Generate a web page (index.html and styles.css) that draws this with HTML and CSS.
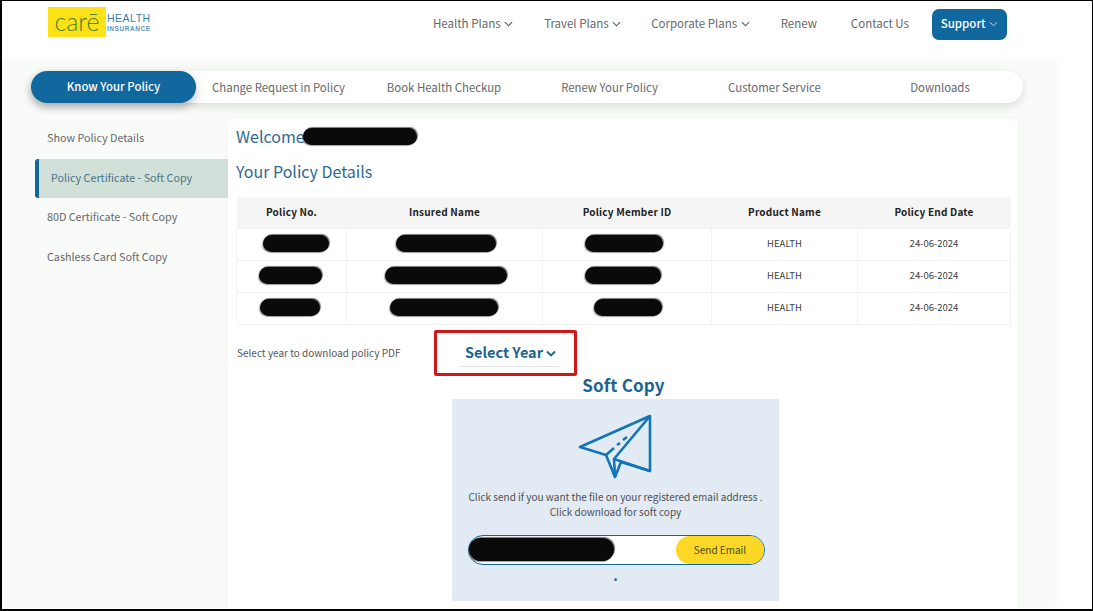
FILE: index.html
```html
<!DOCTYPE html>
<html lang="en">
<head>
    <meta charset="UTF-8">
    <meta name="viewport" content="width=device-width, initial-scale=1.0">
    <title>Care Health Insurance - Policy Details</title>
    <link rel="stylesheet" href="styles.css">
</head>
<body>

<div class="page">
    <!-- top navigation -->
    <header class="site-header">
        <div class="logo">
            <span class="logo-box">carē</span>
            <span class="logo-text">
                <span class="logo-health">HEALTH</span>
                <span class="logo-ins">INSURANCE</span>
            </span>
        </div>
        <nav class="main-nav">
            <a class="nav-link nav-health">Health Plans <svg class="chev" viewBox="0 0 10 6"><path d="M1 1l4 4 4-4"/></svg></a>
            <a class="nav-link nav-travel">Travel Plans <svg class="chev" viewBox="0 0 10 6"><path d="M1 1l4 4 4-4"/></svg></a>
            <a class="nav-link nav-corp">Corporate Plans <svg class="chev" viewBox="0 0 10 6"><path d="M1 1l4 4 4-4"/></svg></a>
            <a class="nav-link nav-renew">Renew</a>
            <a class="nav-link nav-contact">Contact Us</a>
            <a class="support-btn">Support <svg class="chev" viewBox="0 0 10 6"><path d="M1 1l4 4 4-4"/></svg></a>
        </nav>
    </header>

    <main class="main-area">
        <!-- policy tabs -->
        <div class="tabs">
            <div class="tab tab-active">Know Your Policy</div>
            <div class="tab tab-change">Change Request in Policy</div>
            <div class="tab tab-book">Book Health Checkup</div>
            <div class="tab tab-renew">Renew Your Policy</div>
            <div class="tab tab-service">Customer Service</div>
            <div class="tab tab-downloads">Downloads</div>
        </div>

        <div class="columns">
            <!-- side menu -->
            <aside class="side-menu">
                <div class="side-item">Show Policy Details</div>
                <div class="side-item side-active">Policy Certificate - Soft Copy</div>
                <div class="side-item">80D Certificate - Soft Copy</div>
                <div class="side-item side-last">Cashless Card Soft Copy</div>
            </aside>

            <section class="card">
                <h2 class="welcome">Welcome<span class="scribble scribble-welcome"></span></h2>
                <h2 class="details-title">Your Policy Details</h2>

                <table class="policy-table">
                    <thead>
                        <tr>
                            <th class="col-no">Policy No.</th>
                            <th class="col-name">Insured Name</th>
                            <th class="col-member">Policy Member ID</th>
                            <th class="col-product">Product Name</th>
                            <th>Policy End Date</th>
                        </tr>
                    </thead>
                    <tbody>
                        <tr>
                            <td><span class="scribble s-no1"></span></td>
                            <td><span class="scribble s-name1"></span></td>
                            <td><span class="scribble s-id1"></span></td>
                            <td>HEALTH</td>
                            <td>24-06-2024</td>
                        </tr>
                        <tr>
                            <td><span class="scribble s-no2"></span></td>
                            <td><span class="scribble s-name2"></span></td>
                            <td><span class="scribble s-id2"></span></td>
                            <td>HEALTH</td>
                            <td>24-06-2024</td>
                        </tr>
                        <tr>
                            <td><span class="scribble s-no3"></span></td>
                            <td><span class="scribble s-name3"></span></td>
                            <td><span class="scribble s-id3"></span></td>
                            <td>HEALTH</td>
                            <td>24-06-2024</td>
                        </tr>
                    </tbody>
                </table>

                <div class="year-row">
                    <span class="year-label">Select year to download policy PDF</span>
                    <div class="year-box">
                        <div class="year-select">Select Year <svg class="year-chev" viewBox="0 0 10 6"><path d="M1 1l4 4 4-4"/></svg></div>
                    </div>
                </div>

                <h3 class="soft-title">Soft Copy</h3>

                <div class="soft-panel">
                    <svg class="plane" viewBox="0 0 74 66">
                        <path d="M72 2L2 33l26 8 9 22 6-15 29 9z"/>
                        <path d="M72 2L36 45l36 12"/>
                        <path d="M36 45l1 18"/>
                        <path d="M28 41l8-7M39 31l3-2M45 26l4-3"/>
                    </svg>
                    <p class="soft-text">Click send if you want the file on your registered email address .<br>Click download for soft copy</p>
                    <div class="email-box">
                        <span class="scribble s-email"></span>
                        <button class="send-btn">Send Email</button>
                    </div>
                    <div class="dot">.</div>
                </div>
            </section>
        </div>
    </main>
</div>

</body>
</html>
```

FILE: styles.css
```css
* {
    box-sizing: border-box;
}

html, body {
    margin: 0;
    padding: 0;
    height: 100%;
    overflow: hidden;
}

body {
    font-family: "Noto Sans CJK SC", "Noto Sans", Arial, sans-serif;
    background-color: #ffffff;
    color: #5f6265;
}

.page {
    height: 611px;
    border-top: 1px solid #000;
    border-left: 2px solid #000;
    border-right: 1px solid #000;
    border-bottom: 2px solid #000;
    display: flex;
    flex-direction: column;
    overflow: hidden;
}

/* header */
.site-header {
    height: 61px;
    flex-shrink: 0;
    display: flex;
    justify-content: space-between;
    padding: 6px 85px 0 46px;
}

.logo {
    display: flex;
    height: 30px;
    gap: 1px;
}

.logo-box {
    width: 58px;
    height: 30px;
    background-color: #fbe216;
    color: #557f2e;
    font-family: Lato, "Noto Sans", sans-serif;
    font-size: 25px;
    font-weight: 300;
    line-height: 29px;
    text-align: center;
}

.logo-text {
    display: flex;
    flex-direction: column;
    font-family: "Liberation Sans", Arial, sans-serif;
    color: #3a7fab;
    padding-top: 6px;
}

.logo-health {
    font-size: 10.5px;
    line-height: 11px;
    letter-spacing: 0.5px;
}

.logo-ins {
    font-size: 6.5px;
    line-height: 9px;
    font-weight: bold;
    letter-spacing: 0.55px;
    color: #5b93b8;
}

.main-nav {
    display: flex;
    align-items: flex-start;
    height: 40px;
    padding-top: 1px;
    font-size: 11.5px;
}

.nav-link {
    display: block;
    line-height: 30px;
    white-space: nowrap;
    color: #66696c;
}

.nav-health { margin-right: 31px; }
.nav-travel { margin-right: 30px; }
.nav-corp { margin-right: 31px; }
.nav-renew { margin-right: 34px; }
.nav-contact { margin-right: 23px; }

.chev {
    width: 9px;
    height: 6px;
    margin-left: 1px;
    vertical-align: 1px;
    fill: none;
    stroke: #555;
    stroke-width: 1.2;
}

.support-btn {
    width: 75px;
    height: 31px;
    margin-top: 1px;
    line-height: 29px;
    background-color: #10689f;
    color: #ffffff;
    border-radius: 7px;
    text-align: center;
    font-size: 11.5px;
    font-weight: 500;
    white-space: nowrap;
}

.support-btn .chev {
    stroke: #dfeaf2;
    stroke-width: 1;
}

/* main area */
.main-area {
    flex: 1;
    margin-right: 37px;
    background-color: #f9fbf9;
    box-shadow: 0 -3px 8px rgba(0, 0, 0, 0.04);
    padding: 9px 0 0 29px;
    overflow: hidden;
}

.tabs {
    width: 992px;
    height: 32px;
    background-color: #ffffff;
    border-radius: 16px;
    display: flex;
    align-items: center;
    font-size: 11.4px;
    box-shadow: 0 3px 10px rgba(0, 0, 0, 0.13);
    color: #66696c;
    white-space: nowrap;
}

.tab {
    text-align: center;
    line-height: 31px;
}

.tab-active {
    width: 165px;
    height: 32px;
    background-color: #10689f;
    color: #ffffff;
    border-radius: 16px;
    font-weight: 500;
    box-shadow: 0 4px 9px rgba(0, 0, 0, 0.25);
}

.tab-change { width: 165px; }
.tab-book { width: 166px; }
.tab-renew { width: 165px; }
.tab-service { width: 165px; }
.tab-downloads { width: 166px; }

.columns {
    display: flex;
    margin-top: 16px;
    align-items: flex-start;
}

/* side menu */
.side-menu {
    width: 197px;
    font-size: 10.75px;
    padding-left: 4px;
}

.side-item {
    height: 39.5px;
    line-height: 37px;
    padding-left: 12px;
    color: #66696c;
    white-space: nowrap;
}

.side-last {
    line-height: 39px;
}

.side-active {
    height: 39px;
    background-color: #d1e0d9;
    border-left: 4px solid #10689f;
    border-radius: 3px 0 0 3px;
    padding-left: 12px;
    color: #4b7488;
}

/* card */
.card {
    width: 790px;
    height: 500px;
    background-color: #ffffff;
    border-radius: 4px 4px 0 0;
    padding: 0 8px;
    box-shadow: 0 0 6px rgba(0, 0, 0, 0.03);
}

.welcome, .details-title {
    margin: 0;
    font-weight: 400;
    font-size: 16px;
    color: #2f6a92;
    white-space: nowrap;
}

.welcome {
    padding-top: 4px;
    line-height: 26px;
}

.details-title {
    margin-top: 9px;
    line-height: 26px;
}

.policy-table {
    margin-top: 13px;
    width: 775px;
    border-collapse: collapse;
    table-layout: fixed;
    font-size: 9.5px;
    color: #404346;
}

.policy-table th {
    height: 31px;
    padding-bottom: 2px;
    background-color: #f5f5f5;
    font-size: 10px;
    color: #222;
    font-weight: 700;
    letter-spacing: 0.2px;
}

.policy-table td {
    height: 32px;
    padding: 0 0 2px;
    text-align: center;
    border: 1px solid #f3f3f3;
}

.col-no { width: 110px; }
.col-name { width: 196px; }
.col-member { width: 169px; }
.col-product { width: 146px; }

/* marker strokes hiding private data */
.scribble {
    display: inline-block;
    height: 17px;
    background-color: #0a0a0a;
    border-radius: 9px;
    vertical-align: middle;
    box-shadow: 1px -1px 1px rgba(60, 60, 60, 0.7), -1px 1px 1px rgba(70, 70, 70, 0.5);
}

.scribble-welcome { width: 114px; height: 17px; margin-left: -2px; vertical-align: -2px; }
.s-no1 { width: 66px; margin-left: 8px; }
.s-no2 { width: 63px; margin-left: -3px; }
.s-no3 { width: 60px; margin-left: -3px; }
.s-name1 { width: 100px; margin-left: 3px; }
.s-name2 { width: 122px; margin-left: 3px; }
.s-name3 { width: 108px; margin-left: -1px; }
.s-id1 { width: 78px; margin-left: -6px; }
.s-id2 { width: 76px; margin-left: -9px; }
.s-id3 { width: 68px; margin-left: 1px; }

.year-row {
    display: flex;
    align-items: center;
    margin-top: 5px;
    height: 46px;
}

.year-label {
    width: 198px;
    padding-left: 1px;
    font-size: 10px;
    color: #55585a;
    white-space: nowrap;
}

.year-box {
    width: 143px;
    height: 46px;
    border: 3px solid #d01818;
    border-radius: 2px;
    padding: 6px 15px 0 27px;
}

.year-select {
    height: 28px;
    line-height: 25px;
    font-size: 14.5px;
    font-weight: 700;
    color: #1d6491;
    border-bottom: 1px solid #e3e3e3;
    white-space: nowrap;
    margin-left: -4px;
    padding-left: 5px;
}

.year-chev {
    width: 10px;
    height: 7px;
    vertical-align: 1px;
    fill: none;
    stroke: #1d6491;
    stroke-width: 1.9;
}

.soft-title {
    margin: -3px 0 3px;
    width: 775px;
    text-align: center;
    font-size: 17px;
    font-weight: 700;
    color: #1d6491;
    line-height: 23px;
    letter-spacing: 0.2px;
}

.soft-panel {
    margin: 0 0 0 216px;
    width: 327px;
    height: 202px;
    background-color: #e2eaf3;
    display: flex;
    flex-direction: column;
    align-items: center;
    padding-top: 15px;
}

.plane {
    width: 74px;
    height: 66px;
    fill: none;
    stroke: #1275b5;
    stroke-width: 2.6;
    stroke-linejoin: round;
    margin-right: 2px;
}

.soft-text {
    margin: 9px 0 0;
    text-align: center;
    font-size: 10px;
    line-height: 15px;
    color: #4e5053;
    white-space: nowrap;
}

.email-box {
    width: 297px;
    height: 30px;
    margin-top: 16px;
    margin-left: 2px;
    background-color: #ffffff;
    border: 1px solid #10689f;
    border-radius: 15px;
    display: flex;
    align-items: center;
    justify-content: space-between;
}

.s-email {
    width: 145px;
    height: 23px;
    border-radius: 12px;
}

.send-btn {
    width: 88px;
    height: 28px;
    border: 0;
    border-radius: 14px;
    background-color: #fbd826;
    color: #4e4a20;
    font-family: inherit;
    font-size: 10px;
    padding: 0;
}

.dot {
    margin-top: 1px;
    font-size: 14px;
    line-height: 18px;
    font-weight: 700;
    color: #10689f;
}
```
